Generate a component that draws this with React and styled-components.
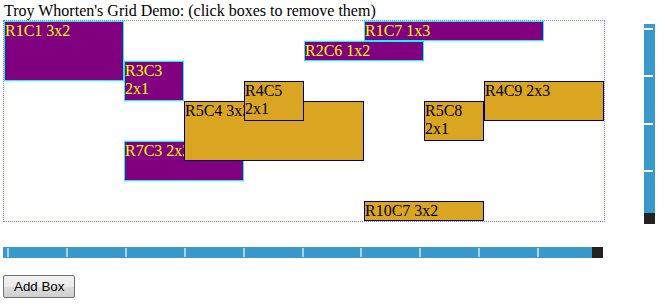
import React, { useState } from "react";
import styled, { createGlobalStyle } from "styled-components";

const CELL_W = 60;
const CELL_H = 20;
const COLS = 10;
const ROWS = 10;

const initialBoxes = [
  { id: 1, row: 1, col: 1, h: 3, w: 2, kind: "purple" },
  { id: 2, row: 3, col: 3, h: 2, w: 1, kind: "purple" },
  { id: 3, row: 7, col: 3, h: 2, w: 2, kind: "purple" },
  { id: 4, row: 5, col: 4, h: 3, w: 3, kind: "gold" },
  { id: 5, row: 4, col: 5, h: 2, w: 1, kind: "gold" },
  { id: 6, row: 2, col: 6, h: 1, w: 2, kind: "purple" },
  { id: 7, row: 1, col: 7, h: 1, w: 3, kind: "purple" },
  { id: 8, row: 5, col: 8, h: 2, w: 1, kind: "gold" },
  { id: 9, row: 4, col: 9, h: 2, w: 3, kind: "gold" },
  { id: 10, row: 10, col: 7, h: 3, w: 2, kind: "gold" },
];

const GlobalStyle = createGlobalStyle`
  body {
    margin: 0;
    background: #fff;
    font-family: "Liberation Serif", "Times New Roman", serif;
    font-size: 16px;
  }
`;

const Page = styled.div`
  padding: 1px 3px;
`;

const Title = styled.div`
  line-height: 19px;
  height: 19px;
  padding-left: 1px;
  color: #000;
`;

const Top = styled.div`
  display: flex;
  align-items: flex-start;
`;

const Grid = styled.div`
  position: relative;
  width: ${COLS * CELL_W}px;
  height: ${ROWS * CELL_H}px;
  border: 1px dotted #8080ff;
  flex-shrink: 0;
`;

const Box = styled.div`
  position: absolute;
  box-sizing: border-box;
  border: 1px solid ${(p) => (p.$kind === "gold" ? "#000080" : "#00ffff")};
  background: ${(p) => (p.$kind === "gold" ? "#daa520" : "#800080")};
  color: ${(p) => (p.$kind === "gold" ? "#000" : "#ffff00")};
  font-size: 16px;
  line-height: 18px;
  overflow: hidden;
  cursor: pointer;
`;

const Track = styled.div`
  position: relative;
  background: #3899ca;
  flex-shrink: 0;
  ${(p) =>
    p.$vertical
      ? `width: 11px; height: 200px; margin: 4px 0 0 39px;`
      : `width: 600px; height: 11px; margin: 23px 0 0 0;`}
`;

const Tick = styled.span`
  position: absolute;
  ${(p) =>
    p.$vertical
      ? `left: 0; width: 9px; height: 2px; background: #f4f8fb;`
      : `top: 1px; height: 9px; width: 2px; background: #a8d3ea;`}
`;

const Handle = styled.span`
  position: absolute;
  width: 11px;
  height: 11px;
  background: #222;
  ${(p) => (p.$vertical ? `left: 0; bottom: 0;` : `right: 0; top: 0;`)}
`;

const AddButton = styled.button`
  display: block;
  margin-top: 17px;
  height: 23px;
  padding: 0 10px;
  border: 1px solid #707070;
  border-radius: 2px;
  background: linear-gradient(#f2f2f2, #ebebeb 50%, #dddddd 51%, #cfcfcf);
  font-family: "Liberation Sans", Arial, sans-serif;
  font-size: 13.33px;
  color: #000;
`;

const Slider = ({ vertical, steps }) => {
  const length = (vertical ? 200 : 600) - 11;
  const ticks = [];
  for (let i = 0; i < steps; i++) {
    const pos = Math.round(4 + (length / steps) * i);
    ticks.push(
      <Tick
        key={i}
        $vertical={vertical}
        style={vertical ? { top: pos } : { left: pos }}
      />
    );
  }
  return (
    <Track $vertical={vertical}>
      {ticks}
      <Handle $vertical={vertical} />
    </Track>
  );
};

const App = () => {
  const [boxes, setBoxes] = useState(initialBoxes);

  const addBox = () => {
    const row = 1 + Math.floor(Math.random() * ROWS);
    const col = 1 + Math.floor(Math.random() * COLS);
    const h = 1 + Math.floor(Math.random() * 3);
    const w = 1 + Math.floor(Math.random() * 3);
    setBoxes([
      ...boxes,
      { id: Date.now(), row, col, h, w, kind: Math.random() > 0.5 ? "gold" : "purple" },
    ]);
  };

  return (
    <Page>
      <GlobalStyle />
      <Title>Troy Whorten's Grid Demo: (click boxes to remove them)</Title>
      <Top>
        <Grid>
          {boxes.map((b) => {
            const rows = Math.min(b.h, ROWS - b.row + 1);
            const cols = Math.min(b.w, COLS - b.col + 1);
            return (
              <Box
                key={b.id}
                $kind={b.kind}
                style={{
                  top: (b.row - 1) * CELL_H,
                  left: (b.col - 1) * CELL_W,
                  width: cols * CELL_W,
                  height: rows * CELL_H,
                }}
                onClick={() => setBoxes(boxes.filter((x) => x.id !== b.id))}
              >
                R{b.row}C{b.col} {b.h}x{b.w}
              </Box>
            );
          })}
        </Grid>
        <Slider vertical steps={4} />
      </Top>
      <Slider steps={10} />
      <AddButton onClick={addBox}>Add Box</AddButton>
    </Page>
  );
};

export default App;
